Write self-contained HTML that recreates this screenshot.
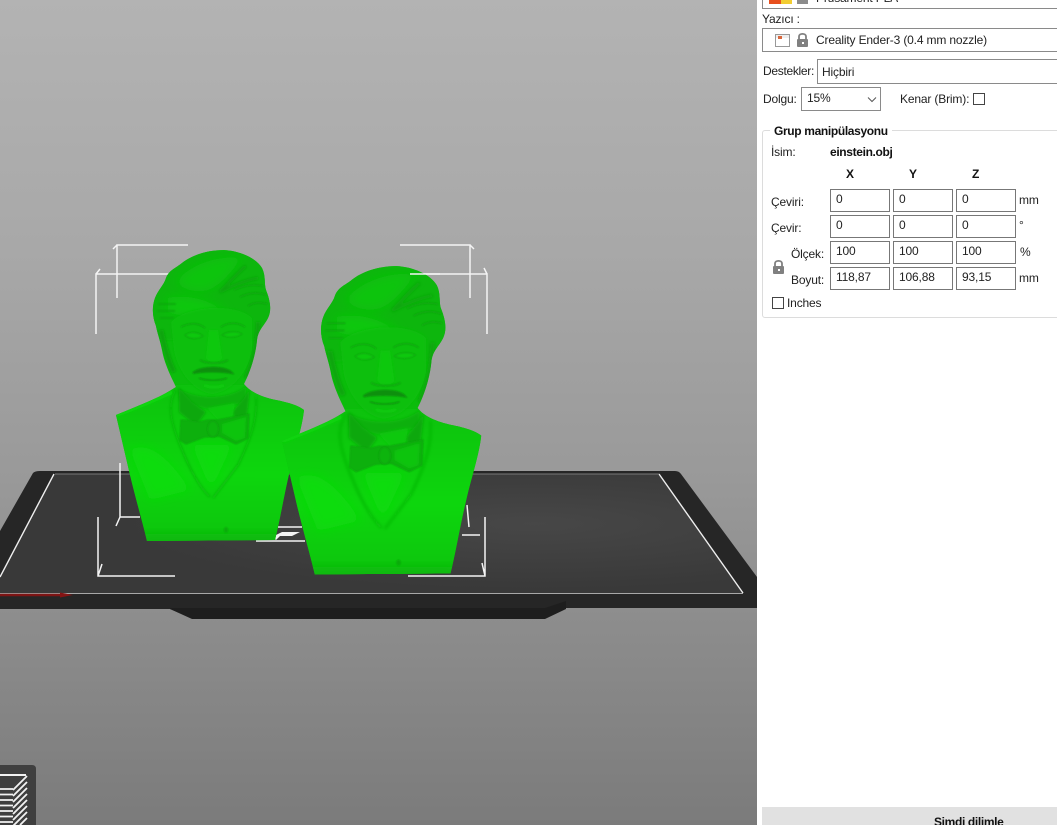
<!DOCTYPE html>
<html><head><meta charset="utf-8"><title>Slicer</title>
<style>
html,body{margin:0;padding:0;background:#fff}
#r{position:relative;width:1057px;height:825px;overflow:hidden;font-family:"Liberation Sans",sans-serif;font-size:12px;color:#222;letter-spacing:-.16px}
#v{position:absolute;left:0;top:0;width:757px;height:825px;background:linear-gradient(#b3b3b3 0,#a8a8a8 250px,#999 480px,#8b8b8b 640px,#7b7b7b 825px)}
svg{position:absolute;left:0;top:0}
#p{position:absolute;left:757px;top:0;width:300px;height:825px;background:#fff;overflow:hidden}
.t{position:absolute;white-space:nowrap;line-height:14px}
.b{position:absolute;border:1px solid #8a8a8a;box-sizing:border-box;background:#fff}
.i{position:absolute;box-sizing:border-box;border:1px solid #777;width:60px;height:23px;padding:2px 0 0 5px;line-height:14px;background:#fff}
.h{font-weight:bold;color:#111;letter-spacing:-.35px}
</style></head><body><div id="r">
<div id="v"></div>
<svg width="757" height="825" viewBox="0 0 757 825">
<defs>
<radialGradient id="g1" cx="0.72" cy="0.42" r="0.55"><stop offset="0" stop-color="#474747"/><stop offset="1" stop-color="#393939"/></radialGradient>
<linearGradient id="coat" x1="0" y1="0" x2="0" y2="1"><stop offset="0" stop-color="#0dc20d"/><stop offset=".55" stop-color="#0ed60e"/><stop offset="1" stop-color="#0bc20b"/></linearGradient>
<filter id="b1" x="-40%" y="-40%" width="180%" height="180%"><feGaussianBlur stdDeviation="1.4"/></filter>
<filter id="b2" x="-40%" y="-40%" width="180%" height="180%"><feGaussianBlur stdDeviation="5"/></filter>
<filter id="b3" x="-40%" y="-40%" width="180%" height="180%"><feGaussianBlur stdDeviation=".7"/></filter>
<clipPath id="sil"><path d="M116 415 C135 407 160 398 176 387 C170 375 164 362 162 350 C160 340 157 332 156 326 C152 316 152 306 155 298 C158 290 164 285 166 278 C169 270 176 268 182 263 C192 255 208 250 224 250 C240 251 256 258 262 268 C266 276 264 284 266 290 C270 300 272 310 268 318 C264 326 258 330 257 340 C256 352 252 368 244 384 C250 392 262 397 276 400 C286 402 298 405 304 410 C302 428 296 445 290 470 C284 495 280 520 275 540 L147 541 C142 520 136 500 130 475 Z"/></clipPath>
<g id="bust">
<path d="M116 415 C135 407 160 398 176 387 C170 375 164 362 162 350 C160 340 157 332 156 326 C152 316 152 306 155 298 C158 290 164 285 166 278 C169 270 176 268 182 263 C192 255 208 250 224 250 C240 251 256 258 262 268 C266 276 264 284 266 290 C270 300 272 310 268 318 C264 326 258 330 257 340 C256 352 252 368 244 384 C250 392 262 397 276 400 C286 402 298 405 304 410 C302 428 296 445 290 470 C284 495 280 520 275 540 L147 541 C142 520 136 500 130 475 Z" fill="#0cbc0c"/>
<g clip-path="url(#sil)">
<path d="M105 412 L172 385 L250 385 L312 408 L290 548 L135 548 Z" fill="url(#coat)" filter="url(#b3)"/>
<!-- hair -->
<path d="M150 250 H275 V320 L262 340 L160 340 L150 320Z" fill="#0bb60b" filter="url(#b1)"/>
<path d="M176 282 C192 262 222 255 244 258 C232 268 224 284 208 290 C196 293 184 290 176 282Z" fill="#0dc40d" filter="url(#b2)"/>
<path d="M168 298 C188 294 212 300 226 314 C210 318 185 318 168 312Z" fill="#0ec80e" filter="url(#b2)"/>
<path d="M246 266 C238 272 228 284 220 292 C232 286 246 280 258 278" fill="none" stroke="#0aa60a" stroke-width="3" filter="url(#b1)"/>
<path d="M234 290 C244 285 254 284 263 286M240 297 C250 292 258 292 266 295M248 306 C254 302 260 302 267 304" fill="none" stroke="#0aa80a" stroke-width="1.800" filter="url(#b3)"/>
<path d="M158 304 H176M157 311 H175M160 318 H174" stroke="#0aa80a" stroke-width="1.600" filter="url(#b3)"/>
<path d="M161 330 C164 345 168 360 174 372" stroke="#0aa40a" stroke-width="5" fill="none" filter="url(#b1)"/>
<path d="M258 322 C258 340 252 362 246 378" stroke="#0aa40a" stroke-width="4" fill="none" filter="url(#b1)"/>
<!-- face -->
<path d="M171 322 C185 306 236 302 252 318 L252 350 C248 372 232 392 212 394 C194 392 178 372 174 350Z" fill="#0cbf0c" filter="url(#b1)"/>
<path d="M181 327 C190 322 199 323 205 328M221 327 C228 322 238 322 245 327" stroke="#0aa80a" stroke-width="1.500" fill="none" filter="url(#b3)"/>
<path d="M185 335 C191 331 198 332 203 336 C198 339 190 340 185 335ZM222 335 C228 331 237 331 242 334 C236 338 228 338 222 335Z" fill="#0fc80f" stroke="#0aa40a" stroke-width=".9" filter="url(#b3)"/>
<path d="M209 330 L206 358 C210 364 218 364 222 358 L218 330Z" fill="#0ec80e" filter="url(#b1)"/>
<path d="M200 360 C206 364 222 364 228 360" stroke="#0aaa0a" stroke-width="2" fill="none" filter="url(#b3)"/>
<path d="M193 373 C201 366 226 366 232 373 C222 371 202 371 193 373Z" fill="#099009" stroke="#099009" stroke-width="2" filter="url(#b3)"/>
<path d="M199 378 C206 381 220 381 227 378" stroke="#099409" stroke-width="1.300" fill="none" filter="url(#b3)"/>
<path d="M204 385 C210 388 218 388 224 385" stroke="#0ecc0e" stroke-width="3" fill="none" filter="url(#b1)"/>
<path d="M178 388 C195 400 230 400 246 386 L246 402 L212 410 L180 402Z" fill="#0ab00a" filter="url(#b1)"/>
<!-- collar -->
<path d="M179 388 L179 412 L196 426 L206 412 L192 402Z" fill="#0aa80a" filter="url(#b1)"/>
<path d="M250 388 L247 416 L238 426 L232 412 L244 398Z" fill="#0aa80a" filter="url(#b1)"/>
<path d="M207 408 L235 403 L231 425 L218 420Z" fill="#0dc80d" filter="url(#b1)"/>
<!-- coat folds -->
<path d="M176 390 C166 405 172 425 180 445 C190 470 200 488 210 497" stroke="#0bb60b" stroke-width="2" fill="none" filter="url(#b1)"/>
<path d="M256 396 C258 420 250 440 238 465 L213 498" stroke="#0bb60b" stroke-width="2" fill="none" filter="url(#b1)"/>
<path d="M192 445 L211 490 L232 445 Z" fill="#0ddc0d" filter="url(#b2)"/>
<path d="M130 450 C150 440 170 460 190 490 L150 500Z" fill="#0fdc0f" filter="url(#b2)"/>
<!-- bow tie -->
<path d="M181 420 L200 422 L208 420 L218 420 L249 414 L248 438 L236 444 L219 436 L204 437 L186 444 L180 440Z" fill="#0ab00a" stroke="#0aa40a" stroke-width="1" filter="url(#b3)"/>
<path d="M222 424 L246 417 L245 438 L236 441 L222 433Z" fill="#0cc40c" filter="url(#b1)"/>
<ellipse cx="213" cy="429" rx="5.500" ry="8" fill="#0ab40a" stroke="#0aa00a" stroke-width="1" filter="url(#b3)"/>
<ellipse cx="226" cy="530" rx="2.200" ry="3" fill="#0aa80a" filter="url(#b3)"/>
<path d="M116 415 C130 410 150 402 172 392" stroke="#10d810" stroke-width="4" fill="none" filter="url(#b1)"/>
<path d="M140 534 H282 V548 H140Z" fill="#0ab80a" filter="url(#b2)"/>
</g>
</g>
</defs>
<!-- bed -->
<path d="M0 531 L33 473 Q35 471 40 471 H675 Q679 471 681 474 L757 577 V608 H566 L545 618 H192 L170 609 H0Z" fill="#262626"/>
<path d="M170 609 L192 619 H545 L566 609 L566 601 L545 608 H170Z" fill="#1e1e1e"/>
<path d="M55 474 H659 L743 593 H0 V577Z" fill="url(#g1)"/>
<path d="M54 474 L0 577M659 474 L743 593" stroke="#eee" stroke-width="1.400" fill="none"/>
<path d="M55 474 H659" stroke="#777" stroke-width="1"/>
<path d="M0 593.500 H743" stroke="#a8a8a8" stroke-width="1"/>
<path d="M0 595 H66" stroke="#7d1414" stroke-width="2.500"/><path d="M60 592.500 L73 595 L60 597.500Z" fill="#851414"/>
<!-- box lines behind -->
<g stroke="#f4f4f4" stroke-width="1.500" fill="none">
<path d="M117 298 V245 H188M117 245 L113 249"/>
<path d="M400 245 H470 V298M470 245 L474 249"/>
<path d="M96 334 V274 H172M96 274 L100 269"/>
<path d="M410 274 H487 V334M484 268 L487 274"/>
<path d="M120 463 V517 H140M120 517 L116 526"/>
<path d="M467 505 L469 527M462 535 H480"/>
<path d="M256 541 H305M278 527 H302"/>
</g>
<path d="M272 537 L282 532 L300 532 L292 536 L280 536 L276 540Z" fill="#f4f4f4"/>
<use href="#bust"/>
<use href="#bust" transform="translate(159 1) scale(1.06)"/>
<g stroke="#f4f4f4" stroke-width="1.500" fill="none">
<path d="M98 517 V576 H175M98 576 L102 564"/>
<path d="M485 517 V576 H408M485 576 L482 563"/>
<path d="M410 274 H440"/>
</g>
<!-- bottom-left icon -->
<path d="M0 765 H32 Q36 765 36 769 V825 H0Z" fill="#3f3f3f"/>
<g fill="none" stroke="#f2f2f2">
<path d="M0 775 H26" stroke-width="2"/>
<path d="M0 789 H13M0 794.500 H13M0 800 H13M0 805.500 H13M0 811 H13M0 816.500 H13M0 822 H13" stroke-width="1.800"/>
<path d="M13 790 L27 776M13 796 L27 782M13 802 L27 788M13 808 L27 794M13 814 L27 800M13 820 L27 806M13 826 L27 812M20 825 L27 818" stroke-width="1.800"/>
</g>
</svg>
<div id="p">
<div class="b" style="left:5px;top:-14px;width:300px;height:23px"></div>
<div style="position:absolute;left:12px;top:0;width:12px;height:4px;background:#e8501e"></div>
<div style="position:absolute;left:24px;top:0;width:11px;height:4px;background:#f2cd32"></div>
<div style="position:absolute;left:40px;top:0;width:11px;height:4px;background:#8c8c8c"></div>
<div class="t" style="left:59px;top:-9px">Prusament PLA</div>
<div class="t" style="left:5px;top:12px">Yazıcı :</div>
<div class="b" style="left:5px;top:28px;width:300px;height:24px"></div>
<svg width="40" height="20" style="left:15px;top:31px">
<rect x="3.500" y="3.500" width="14" height="12" fill="#fff" stroke="#999"/><rect x="4" y="4" width="13" height="3" fill="#eee"/><rect x="6" y="5" width="4" height="3" fill="#d9663c"/>
<path d="M27 8 V5.500 C27 2 34 2 34 5.500 V8" fill="none" stroke="#808080" stroke-width="1.800"/><rect x="25" y="8" width="11" height="8" rx="1" fill="#808080"/><rect x="30" y="11" width="2" height="2" fill="#fff"/>
</svg>
<div class="t" style="left:59px;top:33px">Creality Ender-3 (0.4 mm nozzle)</div>
<div class="t" style="left:6px;top:64px;letter-spacing:-.3px">Destekler:</div>
<div class="b" style="left:60px;top:59px;width:300px;height:25px"></div>
<div class="t" style="left:65px;top:65px">Hiçbiri</div>
<div class="t" style="left:6px;top:92px">Dolgu:</div>
<div class="b" style="left:44px;top:87px;width:80px;height:24px"></div>
<div class="t" style="left:50px;top:91px">15%</div>
<svg width="12" height="8" style="left:110px;top:96px"><path d="M1 1.500 L5 5.500 L9 1.500" fill="none" stroke="#555" stroke-width="1"/></svg>
<div class="t" style="left:143px;top:92px">Kenar (Brim):</div>
<div class="b" style="left:216px;top:93px;width:12px;height:12px;border-color:#444"></div>
<div style="position:absolute;left:5px;top:130px;width:310px;height:188px;box-sizing:border-box;border:1px solid #dcdcdc;border-radius:3px"></div>
<div class="t h" style="left:13px;top:124px;background:#fff;padding:0 4px">Grup manipülasyonu</div>
<div class="t" style="left:14px;top:145px">İsim:</div>
<div class="t h" style="left:73px;top:145px">einstein.obj</div>
<div class="t h" style="left:89px;top:167px">X</div>
<div class="t h" style="left:152px;top:167px">Y</div>
<div class="t h" style="left:215px;top:167px">Z</div>
<div class="t" style="left:14px;top:195px">Çeviri:</div>
<div class="t" style="left:14px;top:221px">Çevir:</div>
<div class="t" style="left:34px;top:247px">Ölçek:</div>
<div class="t" style="left:34px;top:273px">Boyut:</div>
<div class="i" style="left:73px;top:189px">0</div><div class="i" style="left:136px;top:189px">0</div><div class="i" style="left:199px;top:189px">0</div>
<div class="i" style="left:73px;top:215px">0</div><div class="i" style="left:136px;top:215px">0</div><div class="i" style="left:199px;top:215px">0</div>
<div class="i" style="left:73px;top:241px">100</div><div class="i" style="left:136px;top:241px">100</div><div class="i" style="left:199px;top:241px">100</div>
<div class="i" style="left:73px;top:267px">118,87</div><div class="i" style="left:136px;top:267px">106,88</div><div class="i" style="left:199px;top:267px">93,15</div>
<div class="t" style="left:262px;top:193px">mm</div>
<div class="t" style="left:262px;top:218px">°</div>
<div class="t" style="left:263px;top:245px">%</div>
<div class="t" style="left:262px;top:271px">mm</div>
<svg width="16" height="18" style="left:14px;top:259px"><path d="M4 7 V4.500 C4 1 11 1 11 4.500 V7" fill="none" stroke="#808080" stroke-width="1.800"/><rect x="2" y="7" width="11" height="8" rx="1" fill="#808080"/><rect x="7" y="10" width="2" height="2" fill="#fff"/></svg>
<div class="b" style="left:15px;top:297px;width:12px;height:12px;border-color:#444"></div>
<div class="t" style="left:30px;top:296px">Inches</div>
<div style="position:absolute;left:5px;top:807px;width:295px;height:18px;background:#e1e1e1"></div>
<div class="t h" style="left:177px;top:815px">Şimdi dilimle</div>
</div>
</div></body></html>
